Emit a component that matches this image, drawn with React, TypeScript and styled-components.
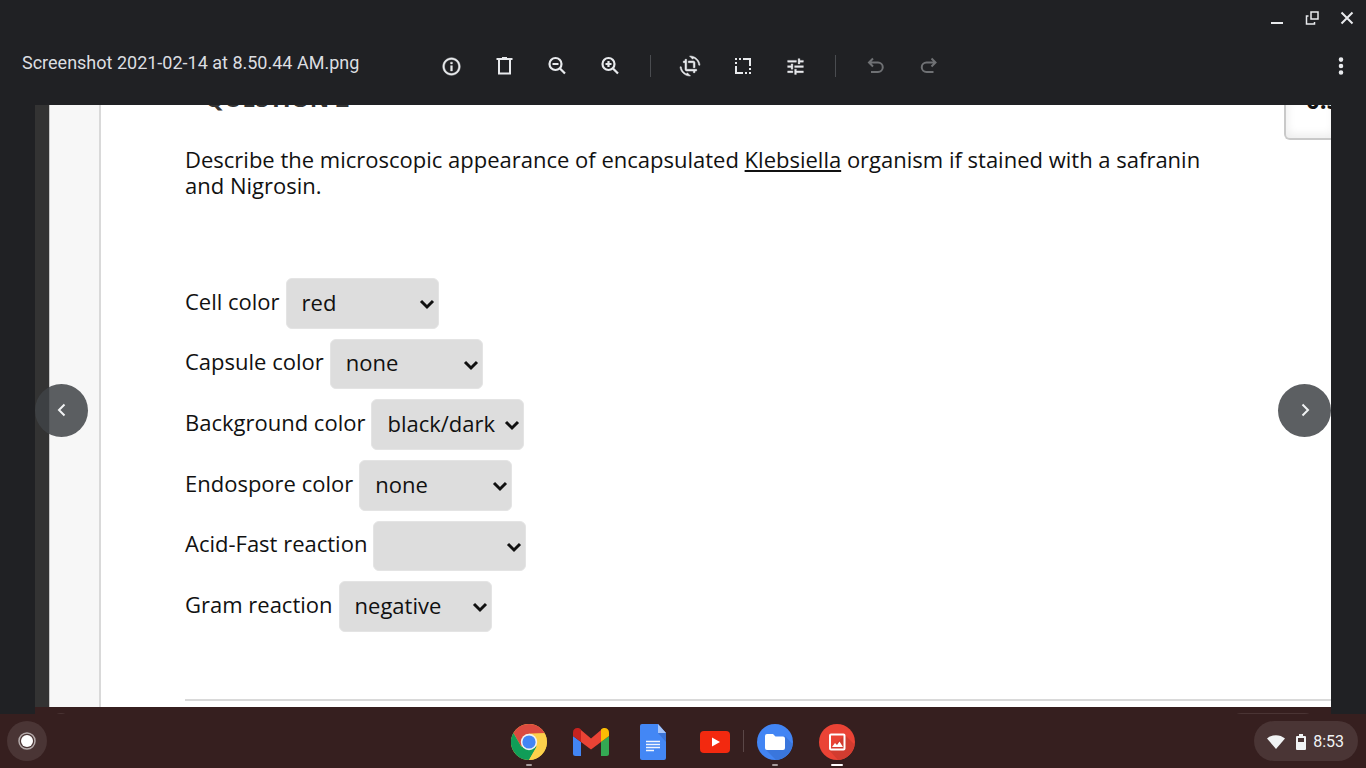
import React from 'react';
import styled, { createGlobalStyle } from 'styled-components';

const GlobalStyle = createGlobalStyle`
  *, *::before, *::after { box-sizing: border-box; }
  body { margin: 0; background: #202124; }
  button, select { font: inherit; }
`;

const Screen = styled.div`
  display: flex;
  flex-direction: column;
  min-height: 100vh;
  background: #202124;
  color: #e8eaed;
  font-family: Roboto, 'Liberation Sans', sans-serif;
`;

const IconButton = styled.button`
  display: flex;
  align-items: center;
  justify-content: center;
  width: 32px;
  height: 32px;
  padding: 0;
  border: 0;
  background: none;
  color: inherit;
  cursor: pointer;

  &:disabled { color: #6f7174; cursor: default; }
`;

const WindowBar = styled.header`
  display: flex;
  justify-content: flex-end;
  gap: 3px;
  height: 34px;
  padding: 2px 3px 0;
`;

const Toolbar = styled.div`
  display: grid;
  grid-template-columns: 1fr auto 1fr;
  height: 71px;
  padding: 16px 9px 0 22px;
`;

const FileName = styled.h1`
  margin: 0;
  color: #dcdee1;
  font-size: 18px;
  line-height: 26px;
  font-weight: 400;
  white-space: nowrap;
`;

const Tools = styled.div`
  display: flex;
  gap: 21px;
  height: 32px;
  align-items: center;
`;

const ToolDivider = styled.span`
  width: 1px;
  height: 22px;
  margin: 0 2px;
  background: #4a4c50;
`;

const MenuSlot = styled.div`
  display: flex;
  justify-content: flex-end;
`;

const Stage = styled.main`
  position: relative;
  display: flex;
  flex: 1;
  padding: 0 35px;
`;

const Picture = styled.div`
  display: flex;
  flex: 1;
  flex-direction: column;
  min-width: 0;
  overflow: hidden;
  color: #111;
  font-family: 'Open Sans', 'Noto Sans', sans-serif;
  font-size: 22px;
  line-height: 26px;
`;

const Page = styled.div`
  display: flex;
  flex: 1;
  background: #fff;
`;

const DarkEdge = styled.div`
  width: 15px;
  background: #333;
  border-right: 1px solid #c8c8c8;
`;

const Gutter = styled.div`
  width: 51px;
  background: #f7f7f7;
  border-right: 2px solid #d9d9d9;
`;

const Question = styled.section`
  flex: 1;
  min-width: 0;
  padding: 0 0 5px 84px;
`;

const QuestionHead = styled.div`
  display: flex;
  justify-content: space-between;
  height: 35px;
  overflow: hidden;
  padding-left: 20px;
`;

const Clipped = styled.h2`
  margin: -20px 0 0;
  color: #333;
  font-size: 24px;
  line-height: 26px;
  font-weight: 700;
`;

const Score = styled.div`
  width: 47px;
  overflow: hidden;
  padding-left: 20px;
  border: solid #c9c9c9;
  border-width: 0 0 2px 2px;
  border-bottom-left-radius: 6px;
  background: #fff;
  box-shadow: inset 2px -4px 8px #eee;
  white-space: nowrap;
`;

const ScoreValue = styled.strong`
  display: block;
  margin-top: -18px;
  font-size: 24px;
`;

const Prompt = styled.p`
  margin: 6px 100px 80px 0;
`;

const Answers = styled.form`
  display: grid;
  grid-auto-rows: 1fr;
  gap: 10px;
  height: 354px;
`;

const Field = styled.label`
  display: flex;
  align-items: center;
  gap: 6px;
`;

const FieldName = styled.span`
  padding-bottom: 5px;
`;

const SelectBox = styled.span`
  position: relative;
  display: flex;
  align-self: stretch;
  width: 153px;

  svg {
    position: absolute;
    right: 4px;
    top: 20px;
    pointer-events: none;
  }
`;

const Select = styled.select`
  appearance: none;
  width: 100%;
  padding: 0 0 3px 15px;
  border: 1px solid #e4e4e4;
  border-radius: 6px;
  background: #ddd;
  color: #111;
  line-height: 32px;
`;

const Rule = styled.hr`
  height: 2px;
  margin: 67px 0 0;
  border: 0;
  background: #d9d9d9;
`;

const InnerShelf = styled.div`
  display: flex;
  justify-content: space-between;
  height: 7px;
  overflow: hidden;
  padding: 6px 16px 0;
  background: #361f1f;
`;

const InnerPill = styled.span<{ $width: number }>`
  width: ${({ $width }) => $width}px;
  height: 20px;
  border-radius: 10px;
  background: #4a3434;
`;

const NavButton = styled.button<{ $side: 'left' | 'right' }>`
  position: absolute;
  ${({ $side }) => $side}: 35px;
  top: 50%;
  display: flex;
  align-items: center;
  justify-content: center;
  width: 53px;
  height: 53px;
  margin-top: -26px;
  padding: 0;
  border: 0;
  border-radius: 50%;
  background: rgba(64, 67, 70, 0.85);
  color: #f1f3f4;
  cursor: pointer;
`;

const Shelf = styled.footer`
  display: grid;
  grid-template-columns: 1fr auto 1fr;
  align-items: center;
  height: 54px;
  padding: 0 8px 0 7px;
  background: #361f1f;
`;

const Launcher = styled.button`
  display: flex;
  align-items: center;
  justify-content: center;
  width: 40px;
  height: 40px;
  padding: 0;
  border: 0;
  border-radius: 50%;
  background: #4a3535;
`;

const Apps = styled.nav`
  display: flex;
  align-items: center;
  height: 54px;
`;

const AppGroup = styled.div`
  display: flex;
  gap: 26px;
`;

const AppButton = styled.button<{ $mark?: string }>`
  position: relative;
  width: 36px;
  height: 54px;
  padding: 2px 0 0;
  border: 0;
  background: none;

  svg { display: block; margin: 0 auto; }

  &::after {
    content: '';
    position: absolute;
    left: 50%;
    bottom: 2px;
    width: ${({ $mark }) => ($mark === '#fff' ? 12 : 6)}px;
    height: 2px;
    border-radius: 1px;
    background: ${({ $mark = 'transparent' }) => $mark};
    transform: translateX(-50%);
  }
`;

const ShelfDivider = styled.span`
  width: 1px;
  height: 22px;
  margin: 0 13px 0 10px;
  background: #5b4747;
`;

const Status = styled.button`
  display: flex;
  align-items: center;
  justify-self: end;
  height: 40px;
  padding: 2px 14px 0 13px;
  border: 0;
  border-radius: 20px;
  background: #4a3535;
  color: #f1f3f4;
  font-size: 16px;
  line-height: 20px;

  svg + svg { margin: 0 7px 0 11px; }
`;

const Glyph = ({ d, size = 24, edge = 0 }: { d: string; size?: number; edge?: number }) => (
  <svg
    width={size}
    height={size}
    viewBox="0 0 24 24"
    fill="currentColor"
    stroke="currentColor"
    strokeWidth={edge}
    overflow="visible"
    aria-hidden="true"
  >
    <path d={d} />
  </svg>
);

const Stroke = ({ d, size = 20, weight = 2 }: { d: string; size?: number; weight?: number }) => (
  <svg
    width={size}
    height={size}
    viewBox="0 0 20 20"
    fill="none"
    stroke="currentColor"
    strokeWidth={weight}
    aria-hidden="true"
  >
    <path d={d} />
  </svg>
);

const ZoomGlyph = ({ plus }: { plus?: boolean }) => (
  <svg width="20" height="20" viewBox="0 0 20 20" fill="none" stroke="currentColor" strokeWidth="2.2" aria-hidden="true">
    <circle cx="7.5" cy="8" r="6" />
    <path d={`M12 12.500l5 5M4.500 8h6${plus ? 'M7.500 5v6' : ''}`} />
  </svg>
);

const INFO = 'M11 7h2v2h-2zm0 4h2v6h-2zm1-9C6.48 2 2 6.48 2 12s4.48 10 10 10 10-4.48 10-10S17.52 2 12 2zm0 18c-4.41 0-8-3.59-8-8s3.59-8 8-8 8 3.59 8 8-3.59 8-8 8z';
const CROP_ROTATE = 'M7.47 21.49C4.2 19.93 1.86 16.76 1.5 13H0c.51 6.16 5.66 11 11.95 11 .23 0 .44-.02.66-.03L8.8 20.15l-1.33 1.34zM12.05 0c-.23 0-.44.02-.66.04l3.81 3.81 1.33-1.33C19.8 4.07 22.14 7.24 22.5 11H24c-.51-6.16-5.66-11-11.95-11zM16 14h2V8c0-1.11-.9-2-2-2h-6v2h6v6zm-8 2V4H6v2H4v2h2v8c0 1.1.89 2 2 2h8v2h2v-2h2v-2H8z';
const TUNE = 'M3 17v2h6v-2H3zM3 5v2h10V5H3zm10 16v-2h8v-2h-8v-2h-2v6h2zM7 9v2H3v2h4v2h2V9H7zm14 4v-2H11v2h10zm-6-4h2V7h4V5h-4V3h-2v6z';

const fields = [
  { name: 'Cell color', value: 'red' },
  { name: 'Capsule color', value: 'none' },
  { name: 'Background color', value: 'black/dark' },
  { name: 'Endospore color', value: 'none' },
  { name: 'Acid-Fast reaction', value: '' },
  { name: 'Gram reaction', value: 'negative' },
];

const ChromeLogo = () => (
  <svg width="36" height="38" viewBox="0 0 36 38" aria-hidden="true">
    <circle cx="18" cy="19" r="18" fill="#f9cf48" />
    <path d="M2.4 10A18 18 0 0 1 33.6 10L18 10.8 10.2 23.5z" fill="#db4a3f" />
    <path d="M2.4 10A18 18 0 0 0 18 37L25.8 23.5 10.2 23.5z" fill="#109d58" />
    <path d="M18 10.8h15.9A18 18 0 0 1 18 37l7.8-13.5z" fill="#fcd04b" />
    <circle cx="18" cy="19" r="8.2" fill="#f1f1f1" />
    <circle cx="18" cy="19" r="6.6" fill="#4285f4" />
  </svg>
);

const GmailLogo = () => (
  <svg width="36" height="28" viewBox="0 0 36 28" aria-hidden="true">
    <path d="M0 8l8 6v14H2.500Q0 28 0 25.500z" fill="#4285f4" />
    <path d="M28 14l8-6v17.500Q36 28 33.500 28H28z" fill="#34a853" />
    <path d="M8 2l10 8.500L28 2v12l-10 7.500L8 14z" fill="#ea4335" />
    <path d="M0 8V4.500C0 .5 4.500-1.500 8 1.600V14L0 8z" fill="#c5221f" />
    <path d="M36 8V4.500C36 .5 31.500-1.500 28 1.600V14z" fill="#fbbc04" />
  </svg>
);

const DocsLogo = () => (
  <svg width="26" height="36" viewBox="0 0 26 36" aria-hidden="true">
    <path d="M2 0h16l8 9v25a2 2 0 0 1-2 2H2a2 2 0 0 1-2-2V2a2 2 0 0 1 2-2z" fill="#4387f5" />
    <path d="M18 9h8v9z" fill="#3b74d6" />
    <path d="M18 0l8 9h-8z" fill="#a6c5fa" />
    <path d="M6 17.500h14M6 20.500h14M6 23.500h14M6 26.500h8" stroke="#f1f5fe" strokeWidth="1.500" />
  </svg>
);

const YouTubeLogo = () => (
  <svg width="30" height="22" viewBox="0 0 30 22" aria-hidden="true">
    <rect width="30" height="22" rx="4" fill="#f3290f" />
    <path d="M12 6.500l8 4.500-8 4.500z" fill="#fff" />
  </svg>
);

const FilesLogo = () => (
  <svg width="36" height="38" viewBox="0 0 36 38" aria-hidden="true">
    <circle cx="18" cy="19" r="18" fill="#4285f4" />
    <path d="M28 13l7.500 8A18 18 0 0 1 19 37L9 27z" fill="#3a76dc" />
    <path d="M10 11h6l2.500 2.500H26a2 2 0 0 1 2 2V25a2 2 0 0 1-2 2H10a2 2 0 0 1-2-2V13a2 2 0 0 1 2-2z" fill="#fff" />
  </svg>
);

const GalleryLogo = () => (
  <svg width="36" height="38" viewBox="0 0 36 38" aria-hidden="true">
    <circle cx="18" cy="19" r="18" fill="#ea4335" />
    <path d="M26 12l9.500 9.500A18 18 0 0 1 19 37l-9-10z" fill="#d23c30" />
    <rect x="11" y="11.500" width="14.500" height="15" rx="1" fill="none" stroke="#fff" strokeWidth="2" />
    <path d="M13 24l3-4 2 2 2.500-3.500L24 24z" fill="#fff" />
  </svg>
);

export default function App() {
  return (
    <Screen>
      <GlobalStyle />
      <WindowBar>
        <IconButton aria-label="Minimize"><Stroke d="M4 15h12" /></IconButton>
        <IconButton aria-label="Restore"><Stroke d="M9 4h7v7H9zM6.500 8H4.500v8h8v-2" weight={1.500} /></IconButton>
        <IconButton aria-label="Close"><Stroke d="M4.500 4.500l11 11M15.500 4.500l-11 11" /></IconButton>
      </WindowBar>
      <Toolbar>
        <FileName>Screenshot 2021-02-14 at 8.50.44 AM.png</FileName>
        <Tools>
          <IconButton aria-label="Info"><Glyph d={INFO} size={21} edge={0.5} /></IconButton>
          <IconButton aria-label="Delete"><Stroke d="M1.500 3h16M7 2h5M4 3v14.500h11V3" /></IconButton>
          <IconButton aria-label="Zoom out"><ZoomGlyph /></IconButton>
          <IconButton aria-label="Zoom in"><ZoomGlyph plus /></IconButton>
          <ToolDivider />
          <IconButton aria-label="Crop and rotate"><Glyph d={CROP_ROTATE} size={20} edge={0.6} /></IconButton>
          <IconButton aria-label="Rescale">
            <Stroke d="M10 3h7v7M3 10v7h7M2 3h2M6 3h2M2 7h2M16 13h2M16 17h2M12 17h2" />
          </IconButton>
          <IconButton aria-label="Adjust lighting"><Glyph d={TUNE} size={21} edge={0.4} /></IconButton>
          <ToolDivider />
          <IconButton aria-label="Undo" disabled>
            <Stroke d="M8 2.500L4 6.500l4 4M4 6.500h9a4.700 4.700 0 0 1 0 9.500H6" />
          </IconButton>
          <IconButton aria-label="Redo" disabled>
            <Stroke d="M13.500 2.500l4 4-4 4M17.500 6.500h-9a4.700 4.700 0 0 0 0 9.500h7" />
          </IconButton>
        </Tools>
        <MenuSlot>
          <IconButton aria-label="More options">
            <Glyph d="M12 7.500a2.500 2.500 0 1 0 0-5 2.500 2.500 0 0 0 0 5zm0 7a2.500 2.500 0 1 0 0-5 2.500 2.500 0 0 0 0 5zm0 7a2.500 2.500 0 1 0 0-5 2.500 2.500 0 0 0 0 5z" size={22} />
          </IconButton>
        </MenuSlot>
      </Toolbar>

      <Stage>
        <Picture>
          <Page>
            <DarkEdge />
            <Gutter />
            <Question>
              <QuestionHead>
                <Clipped>QUESTION 2</Clipped>
                <Score><ScoreValue>0.5</ScoreValue></Score>
              </QuestionHead>
              <Prompt>
                Describe the microscopic appearance of encapsulated <u>Klebsiella</u> organism if stained
                with a safranin and Nigrosin.
              </Prompt>
              <Answers>
                {fields.map(({ name, value }) => (
                  <Field key={name}>
                    <FieldName>{name}</FieldName>
                    <SelectBox>
                      <Select defaultValue={value}>
                        <option value={value}>{value}</option>
                      </Select>
                      <svg width="16" height="12" viewBox="0 0 16 12" aria-hidden="true">
                        <path d="M2 3l6 6 6-6" fill="none" stroke="#111" strokeWidth="3" />
                      </svg>
                    </SelectBox>
                  </Field>
                ))}
              </Answers>
              <Rule />
            </Question>
          </Page>
          <InnerShelf>
            <InnerPill $width={20} />
            <InnerPill $width={84} />
          </InnerShelf>
        </Picture>
        <NavButton $side="left" aria-label="Previous image"><Stroke d="M12.500 4.500L7 10l5.500 5.500" /></NavButton>
        <NavButton $side="right" aria-label="Next image"><Stroke d="M7.500 4.500L13 10l-5.500 5.500" /></NavButton>
      </Stage>

      <Shelf>
        <Launcher aria-label="Launcher">
          <svg width="20" height="20" viewBox="0 0 20 20" aria-hidden="true">
            <circle cx="10" cy="10" r="8" fill="none" stroke="#b5abab" strokeWidth="1.500" />
            <circle cx="10" cy="10" r="6" fill="#fff" />
          </svg>
        </Launcher>
        <Apps aria-label="Apps">
          <AppGroup>
            <AppButton aria-label="Chrome" $mark="#a89d9d"><ChromeLogo /></AppButton>
            <AppButton aria-label="Gmail"><GmailLogo /></AppButton>
            <AppButton aria-label="Docs"><DocsLogo /></AppButton>
            <AppButton aria-label="YouTube"><YouTubeLogo /></AppButton>
          </AppGroup>
          <ShelfDivider />
          <AppGroup>
            <AppButton aria-label="Files" $mark="#a89d9d"><FilesLogo /></AppButton>
            <AppButton aria-label="Gallery" $mark="#fff"><GalleryLogo /></AppButton>
          </AppGroup>
        </Apps>
        <Status aria-label="Status">
          <svg width="18" height="14" viewBox="0 0 18 14" fill="currentColor" aria-hidden="true">
            <path d="M0 3.500C5-1 13-1 18 3.500L9 14z" />
          </svg>
          <svg width="10" height="16" viewBox="0 0 10 16" fill="currentColor" fillRule="evenodd" aria-hidden="true">
            <path d="M3 0h4v2h2a1 1 0 0 1 1 1v12a1 1 0 0 1-1 1H1a1 1 0 0 1-1-1V3a1 1 0 0 1 1-1h2zM2 4v4h6V4z" />
          </svg>
          8:53
        </Status>
      </Shelf>
    </Screen>
  );
}
